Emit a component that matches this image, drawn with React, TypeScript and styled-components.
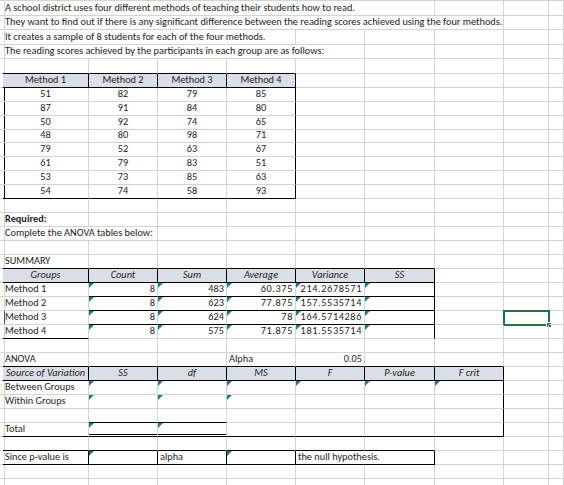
import React from 'react';
import styled, { createGlobalStyle, css } from 'styled-components';

type Line = 'grid' | 'black' | 'double' | 'green';
type Align = 'left' | 'center' | 'right';

interface Spec {
  text?: string;
  align?: Align;
  bold?: boolean;
  italic?: boolean;
  head?: boolean;
  span?: number;
  tri?: boolean;
  wide?: boolean;
  bb?: Line;
  br?: Line;
  sel?: boolean;
}

const GlobalStyle = createGlobalStyle`
  html, body { margin: 0; padding: 0; background: #ffffff; }
  body { overflow: hidden; font-family: Carlito, Lato, "Liberation Sans", sans-serif; }
`;

const NR = 35;
const NC = 10;

const rowHeights: number[] = [];
for (let r = 1; r <= NR; r++) {
  rowHeights.push(r <= 5 ? 14.6 : r <= 15 ? 13.9 : 14);
}

const lineCss = (l: Line | undefined) => {
  switch (l) {
    case 'black':
      return '1px solid #000000';
    case 'double':
      return '3px double #000000';
    case 'green':
      return '1px solid #217346';
    default:
      return '1px solid #d4d4d4';
  }
};

const Sheet = styled.div`
  display: grid;
  grid-template-columns: 3px 86px 69px 69px 69px 69px 70px 69px 45px 1fr;
  grid-template-rows: ${rowHeights.map((h) => `${h}px`).join(' ')};
  width: 564px;
  height: 485px;
  overflow: hidden;
  border-top: 1px solid #d4d4d4;
  box-sizing: border-box;
  font-size: 10.3px;
  color: #1e1e1e;
`;

const Cell = styled.div<{
  $bb?: Line;
  $br?: Line;
  $align: Align;
  $head?: boolean;
  $bold?: boolean;
  $italic?: boolean;
  $span: number;
  $tri?: boolean;
  $wide?: boolean;
}>`
  position: relative;
  box-sizing: border-box;
  min-width: 0;
  grid-column: span ${(p) => p.$span};
  border-right: ${(p) => lineCss(p.$br)};
  border-bottom: ${(p) => lineCss(p.$bb)};
  background: ${(p) => (p.$head ? '#dadee7' : 'transparent')};
  display: flex;
  align-items: flex-end;
  justify-content: ${(p) =>
    p.$align === 'center' ? 'center' : p.$align === 'right' ? 'flex-end' : 'flex-start'};
  padding: 0 2px 2px 2px;
  white-space: nowrap;
  line-height: 11px;
  letter-spacing: ${(p) => (p.$wide ? '0.6px' : 'normal')};
  font-weight: ${(p) => (p.$bold ? 700 : 400)};
  font-style: ${(p) => (p.$italic ? 'italic' : 'normal')};
  ${(p) =>
    p.$tri &&
    css`
      &::before {
        content: '';
        position: absolute;
        top: 0;
        left: 0;
        width: 0;
        height: 0;
        border-top: 5px solid #1f7d85;
        border-right: 5px solid transparent;
      }
    `}
`;

const Selection = styled.div`
  position: absolute;
  top: -1px;
  left: -1px;
  right: -2px;
  bottom: -2px;
  border: 2px solid #217346;
  pointer-events: none;
`;

const FillHandle = styled.div`
  position: absolute;
  right: -4px;
  bottom: -4px;
  width: 4px;
  height: 4px;
  background: #217346;
  border: 1px solid #ffffff;
`;

function buildSheet(): Spec[][] {
  const g: Spec[][] = Array.from({ length: NR + 1 }, () =>
    Array.from({ length: NC }, () => ({} as Spec))
  );
  const put = (r: number, c: number, s: Spec) => Object.assign(g[r][c], s);

  // Intro text
  put(1, 1, { text: 'A school district uses four different methods of teaching their students how to read.', span: 6 });
  put(2, 1, {
    text: 'They want to find out if there is any significant difference between the reading scores achieved using the four methods.',
    span: 7,
  });
  put(3, 1, { text: 'It creates a sample of 8 students for each of the four methods.', span: 4 });
  put(4, 1, { text: 'The reading scores achieved by the participants in each group are as follows:', span: 5 });

  // Method table
  const data = [
    [51, 87, 50, 48, 79, 61, 53, 54],
    [82, 91, 92, 80, 52, 79, 73, 74],
    [79, 84, 74, 98, 63, 83, 85, 58],
    [85, 80, 65, 71, 67, 51, 63, 93],
  ];
  put(6, 0, { br: 'black' });
  for (let c = 1; c <= 4; c++) {
    put(5, c, { bb: 'black' });
    put(6, c, { text: `Method ${c}`, align: 'center', head: true, br: 'black', bb: 'black' });
    data[c - 1].forEach((v, i) => put(7 + i, c, { text: String(v), align: 'center' }));
    put(14, c, { bb: 'black' });
  }
  for (let r = 7; r <= 14; r++) {
    put(r, 4, { br: 'black' });
    put(r, 0, { br: 'black' });
  }

  put(16, 1, { text: 'Required:', bold: true });
  put(17, 1, { text: 'Complete the ANOVA tables below:', span: 2 });

  // Summary
  put(19, 1, { text: 'SUMMARY' });
  const sumHead = ['Groups', 'Count', 'Sum', 'Average', 'Variance', 'SS'];
  put(20, 0, { br: 'black' });
  sumHead.forEach((h, i) => {
    put(19, i + 1, { bb: 'black' });
    put(20, i + 1, { text: h, align: 'center', italic: true, head: true, br: 'black', bb: 'black' });
  });
  const sums = [
    ['Method 1', '8', '483', '60.375', '214.2678571'],
    ['Method 2', '8', '623', '77.875', '157.5535714'],
    ['Method 3', '8', '624', '78', '164.5714286'],
    ['Method 4', '8', '575', '71.875', '181.5535714'],
  ];
  sums.forEach((row, i) => {
    const r = 21 + i;
    put(r, 1, { text: row[0] });
    for (let c = 2; c <= 6; c++) {
      put(r, c, { text: row[c - 1], align: 'right', tri: true, wide: c >= 4 });
      if (i < 3) put(r, c, { bb: 'black' });
    }
    put(r, 6, { br: 'black' });
  });
  put(24, 1, { bb: 'black' });

  // Selected cell
  put(23, 8, { sel: true });
  put(23, 0, { br: 'green' });

  // ANOVA
  put(26, 1, { text: 'ANOVA' });
  put(26, 4, { text: 'Alpha' });
  put(26, 5, { text: '0.05', align: 'right' });
  const anHead = ['Source of Variation', 'SS', 'df', 'MS', 'F', 'P-value', 'F crit'];
  put(27, 0, { br: 'black' });
  anHead.forEach((h, i) => {
    put(26, i + 1, { bb: 'black' });
    put(27, i + 1, { text: h, align: 'center', italic: true, head: true, br: 'black', bb: 'black' });
  });
  put(28, 1, { text: 'Between Groups' });
  put(29, 1, { text: 'Within Groups' });
  put(31, 1, { text: 'Total' });
  for (let c = 2; c <= 7; c++) put(28, c, { tri: true });
  for (let c = 2; c <= 4; c++) put(29, c, { tri: true });
  for (let c = 2; c <= 3; c++) put(31, c, { tri: true });
  for (let r = 28; r <= 31; r++) put(r, 7, { br: 'black' });
  put(30, 2, { bb: 'black' });
  put(30, 3, { bb: 'black' });
  put(31, 1, { bb: 'black' });
  put(31, 2, { bb: 'double' });
  put(31, 3, { bb: 'double' });
  for (let c = 4; c <= 7; c++) put(31, c, { bb: 'black' });

  // Conclusion row
  put(33, 1, { text: 'Since p-value is', br: 'black' });
  put(33, 2, { tri: true, br: 'black' });
  put(33, 3, { text: 'alpha', br: 'black' });
  put(33, 4, { tri: true, br: 'black' });
  put(33, 5, { text: 'the null hypothesis.', span: 2, br: 'black' });
  for (let c = 1; c <= 6; c++) {
    put(32, c, { bb: 'black' });
    put(33, c, { bb: 'black' });
  }

  return g;
}

const sheet = buildSheet();

export default function App() {
  const cells: React.ReactNode[] = [];
  for (let r = 1; r <= NR; r++) {
    let c = 0;
    while (c < NC) {
      const s = sheet[r][c];
      const span = s.span ?? 1;
      cells.push(
        <Cell
          key={`${r}-${c}`}
          $span={span}
          $align={s.align ?? 'left'}
          $bb={s.bb}
          $br={s.br}
          $head={s.head}
          $bold={s.bold}
          $italic={s.italic}
          $tri={s.tri}
          $wide={s.wide}
        >
          {s.text}
          {s.sel && (
            <Selection>
              <FillHandle />
            </Selection>
          )}
        </Cell>
      );
      c += span;
    }
  }
  return (
    <>
      <GlobalStyle />
      <Sheet>{cells}</Sheet>
    </>
  );
}
